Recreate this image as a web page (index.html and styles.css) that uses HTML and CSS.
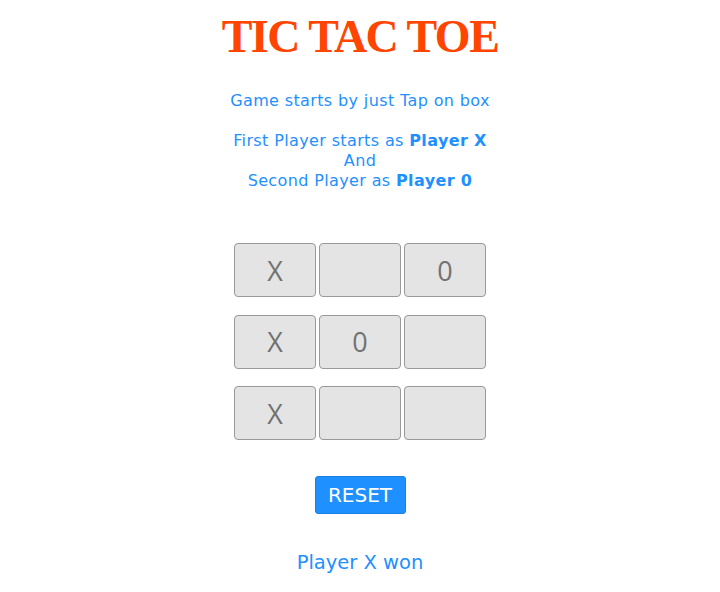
FILE: index.html
```html
<!DOCTYPE html>
<html>
<head>
<meta charset="utf-8">
<link rel="stylesheet" href="styles.css">
</head>
<body>
<h1 class="title">TIC TAC TOE</h1>
<p class="info">Game starts by just Tap on box</p>
<p class="info">First Player starts as <b>Player X</b><br>And<br>Second Player as <b>Player 0</b></p>
<div class="board">
  <div class="row"><div class="cell">X</div><div class="cell"></div><div class="cell">0</div></div>
  <div class="row"><div class="cell">X</div><div class="cell">0</div><div class="cell"></div></div>
  <div class="row"><div class="cell">X</div><div class="cell"></div><div class="cell"></div></div>
</div>
<div class="actions"><button class="reset">RESET</button></div>
<p class="result">Player X won</p>
</body>
</html>
```
FILE: styles.css
```css
body {
  margin: 8px;
  font-family: "DejaVu Sans", Verdana, sans-serif;
  color: #1e90ff;
  text-align: center;
  background: #fff;
}
.title {
  font-family: "Liberation Serif", "Times New Roman", serif;
  font-weight: bold;
  font-size: 46px;
  letter-spacing: -1.5px;
  color: #ff4500;
  margin: 5px 0 0;
  line-height: 48px;
}
.info {
  font-size: 16px;
  letter-spacing: 0.37px;
  line-height: 20px;
  margin: 30px 0 0;
}
.info + .info {
  margin-top: 20px;
}
.board {
  display: flex;
  flex-direction: column;
  align-items: center;
  gap: 17.5px;
  margin-top: 52px;
}
.row {
  display: flex;
  gap: 3px;
}
.cell {
  box-sizing: border-box;
  width: 82px;
  height: 54px;
  border: 1px solid #999;
  border-radius: 4px;
  background: #e4e4e4;
  color: #727272;
  font-family: "Open Sans", sans-serif;
  font-size: 27px;
  display: flex;
  align-items: center;
  justify-content: center;
}
.actions {
  margin-top: 36px;
}
.reset {
  box-sizing: border-box;
  width: 91px;
  height: 38px;
  background: #1e90ff;
  color: #fff;
  border: 1px solid #1a80e6;
  border-radius: 3px;
  font-family: "DejaVu Sans", Verdana, sans-serif;
  font-size: 20px;
  padding: 0;
}
.result {
  font-size: 19.5px;
  margin: 37px 0 0;
  line-height: 24px;
}
```
